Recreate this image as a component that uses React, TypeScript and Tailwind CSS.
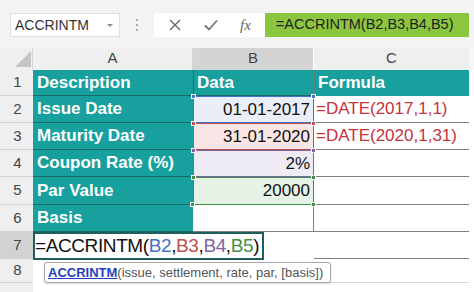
import React from "react";

const font = "font-['Liberation_Sans',Arial,sans-serif]";

type Row = {
  n: number;
  h: string;
  a?: string;
  b?: string;
  bCls?: string;
  c?: string;
};

const rows: Row[] = [
  { n: 2, h: "h-[27px]", a: "Issue Date", b: "01-01-2017", bCls: "bg-[#e9eef8] border border-[#4472c4]", c: "=DATE(2017,1,1)" },
  { n: 3, h: "h-[27px]", a: "Maturity Date", b: "31-01-2020", bCls: "bg-[#f9e5e5] border border-[#c0504d]", c: "=DATE(2020,1,31)" },
  { n: 4, h: "h-[27px]", a: "Coupon Rate (%)", b: "2%", bCls: "bg-[#efebf5] border border-[#8064a2]" },
  { n: 5, h: "h-[28px]", a: "Par Value", b: "20000", bCls: "bg-[#e6f2e6] border border-[#3f8f46]" },
  { n: 6, h: "h-[27px]", a: "Basis", bCls: "bg-white border-b border-r border-[#7f7f7f]" },
];

function Handles({ color }: { color: string }) {
  const sq = "absolute w-[5px] h-[5px] border border-white";
  return (
    <>
      <span className={`${sq} -left-[3px] -top-[3px] ${color}`} />
      <span className={`${sq} -right-[3px] -top-[3px] ${color}`} />
    </>
  );
}

function RowHead({ n, dark }: { n?: number; dark?: boolean }) {
  return (
    <div
      className={`w-[33px] shrink-0 flex items-center justify-center pl-[2px] text-[15px] text-[#444] border-b border-[#d4d4d4] ${
        dark ? "bg-[#d2d2d2]" : "bg-[#efefef]"
      }`}
    >
      {n}
    </div>
  );
}

export default function App() {
  return (
    <div className={`w-[474px] h-[292px] overflow-hidden bg-white ${font}`}>
      {/* formula bar */}
      <div className="h-[48px] bg-[#f3f3f3] flex items-start pt-[13px] pl-[10px]">
        <div className="w-[110px] h-[24px] bg-white border border-[#e0e0e0] flex items-center pl-[4px] text-[14px] text-[#333] relative">
          ACCRINTM
          <span className="absolute left-[96px] top-[10px] w-0 h-0 border-l-[3px] border-r-[3px] border-t-[3px] border-l-transparent border-r-transparent border-t-[#888]" />
        </div>
        <div className="w-[34px] h-[24px] flex flex-col items-center justify-center gap-[3px]">
          <span className="w-[2px] h-[2px] bg-[#b0b0b0]" />
          <span className="w-[2px] h-[2px] bg-[#b0b0b0]" />
          <span className="w-[2px] h-[2px] bg-[#b0b0b0]" />
        </div>
        <div className="w-[315px] h-[24px] bg-white flex items-center">
          <svg width="14" height="14" viewBox="0 0 14 14" className="ml-[14px]">
            <path d="M2 2 L12 12 M12 2 L2 12" stroke="#666" strokeWidth="1.4" />
          </svg>
          <svg width="16" height="14" viewBox="0 0 16 14" className="ml-[21px]">
            <path d="M2 7.5 L6 11.5 L14 2.5" stroke="#777" strokeWidth="1.8" fill="none" />
          </svg>
          <span className="ml-[21px] font-['Liberation_Serif',serif] italic text-[15px] text-[#666]">fx</span>
          <div className="ml-[14px] flex-1 h-[24px] bg-[#8cc63e] flex items-center pl-[11px] text-[14.5px] text-[#222]">
            =ACCRINTM(B2,B3,B4,B5)
          </div>
        </div>
      </div>

      {/* column headers */}
      <div className="flex h-[22px] text-[15px] text-[#444]">
        <div className="w-[33px] bg-[#efefef] relative border-r border-[#d6d6d6]">
          <svg width="16" height="16" viewBox="0 0 16 16" className="absolute right-[1px] bottom-[3px]">
            <path d="M16 0 L16 16 L0 16 Z" fill="#c4c4c4" />
          </svg>
        </div>
        <div className="w-[160px] bg-[#efefef] flex items-end justify-center pb-[1px] border-r border-[#d6d6d6]">A</div>
        <div className="w-[121px] bg-[#d4d4d4] flex items-end justify-center pb-[1px] border-r border-white">B</div>
        <div className="w-[155px] bg-[#efefef] flex items-end justify-center pb-[1px]">C</div>
        <div className="flex-1 bg-[#f6f6f6]" />
      </div>

      {/* row 1 */}
      <div className="flex h-[26px]">
        <RowHead n={1} />
        <div className="w-[160px] bg-[#17a09d] border-b border-[#1c6b69] text-white font-bold text-[17px] flex items-center pl-[4px]">
          Description
        </div>
        <div className="w-[121px] bg-[#17a09d] border-b border-[#1c6b69] border-l border-l-[#1c6b69] text-white font-bold text-[17px] flex items-center pl-[3px]">
          Data
        </div>
        <div className="w-[155px] bg-[#17a09d] border-l border-[#5a7f7e] text-white font-bold text-[17px] flex items-center pl-[3px]">
          Formula
        </div>
      </div>

      {rows.map((r) => (
        <div key={r.n} className={`flex ${r.h}`}>
          <RowHead n={r.n} />
          <div className="w-[160px] bg-[#17a09d] border-b border-[#1c6b69] text-white font-bold text-[17px] flex items-center pl-[4px]">
            {r.a}
          </div>
          <div className={`w-[121px] relative flex items-center justify-end pr-[3px] text-[17px] text-[#111] ${r.bCls}`}>
            {r.b}
            {r.n === 2 && <Handles color="bg-[#4472c4]" />}
            {r.n === 3 && <Handles color="bg-[#c0504d]" />}
            {r.n === 4 && <Handles color="bg-[#8064a2]" />}
            {r.n === 5 && <Handles color="bg-[#3f8f46]" />}
            {r.n === 6 && <Handles color="bg-[#3f8f46]" />}
          </div>
          <div className="w-[155px] border-b border-[#7f7f7f] flex items-center pl-[2px] text-[17px] text-[#c8323a]">
            {r.c}
          </div>
        </div>
      ))}

      {/* row 7 - editing */}
      <div className="flex h-[27px]">
        <RowHead n={7} dark />
        <div className="w-[160px] relative">
          <div className="absolute left-0 top-0 w-[231px] h-[28px] border-2 border-[#1f5e5c] bg-white flex items-center text-[19px] tracking-[-0.4px] text-[#111] z-10">
            <span>=ACCRINTM(</span>
            <span className="text-[#4472c4]">B2</span>,<span className="text-[#c0504d]">B3</span>,
            <span className="text-[#8064a2]">B4</span>,<span className="text-[#3f8f46]">B5</span>)
          </div>
        </div>
        <div className="w-[121px]" />
        <div className="w-[155px] border-b border-[#7f7f7f]" />
      </div>

      {/* row 8 - tooltip */}
      <div className="flex h-[24px]">
        <RowHead n={8} />
        <div className="w-[160px] relative">
          <div className="absolute left-[11px] top-[3px] h-[21px] w-[287px] bg-white border border-[#a8a8a8] rounded-[3px] shadow-[0_1px_2px_rgba(0,0,0,0.15)] flex items-center pl-[3px] text-[13px] text-[#555] whitespace-nowrap z-10">
            <span className="font-bold text-[#1f3fbf] underline">ACCRINTM</span>
            (issue, settlement, rate, par, [basis])
          </div>
        </div>
        <div className="w-[121px]" />
        <div className="w-[155px] border-b border-[#d8d8d8]" />
      </div>

      {/* row 9 partial */}
      <div className="flex h-[20px]">
        <RowHead />
      </div>
    </div>
  );
}
